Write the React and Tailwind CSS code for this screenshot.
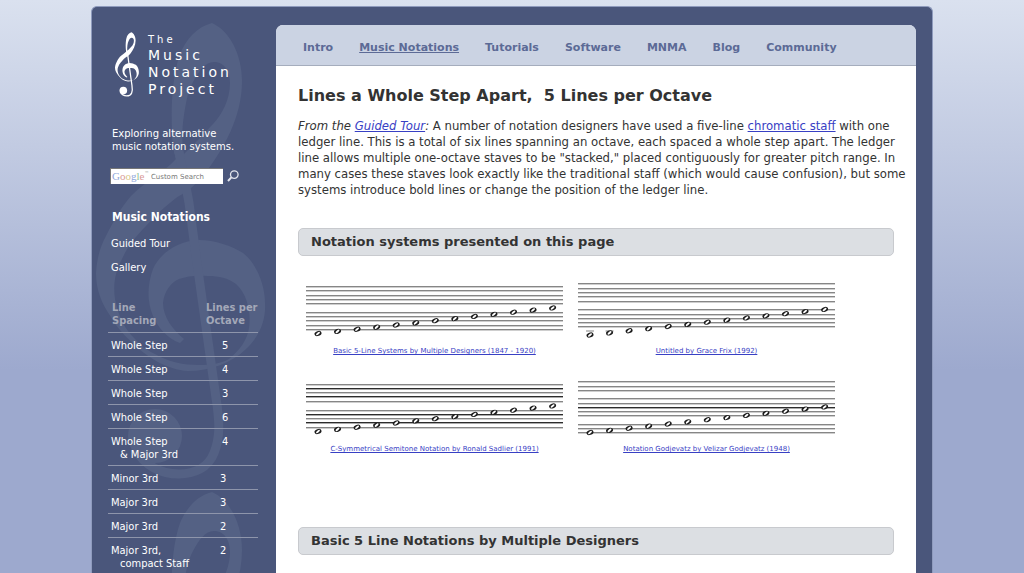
const tabs = ["Intro", "Music Notations", "Tutorials", "Software", "MNMA", "Blog", "Community"];

const rows = [
  { label: "Whole Step", count: 5, wide: true },
  { label: "Whole Step", count: 4, wide: true },
  { label: "Whole Step", count: 3, wide: true },
  { label: "Whole Step", count: 6, wide: true },
  { label: "Whole Step", extra: "& Major 3rd", count: 4, wide: true },
  { label: "Minor 3rd", count: 3 },
  { label: "Major 3rd", count: 3 },
  { label: "Major 3rd", count: 2 },
  { label: "Major 3rd,", extra: "compact Staff", count: 2 },
];

// y and colour of each staff line
const G = "#868686";
const D = "#2c2c2c";
const systems = [
  {
    title: "Basic 5-Line Systems by Multiple Designers (1847 - 1920)",
    lines: [[5, G], [9, G], [14, G], [18, G], [22, G], [31, G], [35, G], [39, G], [44, G], [48, G]],
    noteY: 52.5,
    ledgers: [],
  },
  {
    title: "Untitled by Grace Frix (1992)",
    lines: [[2, G], [7, G], [11, G], [15, G], [20, G], [28, G], [33, G], [37, G], [41, G], [45, G]],
    noteY: 54,
    ledgers: [0, 1],
  },
  {
    title: "C-Symmetrical Semitone Notation by Ronald Sadlier (1991)",
    lines: [[5, G], [9, D], [13, G], [17, D], [22, G], [31, G], [35, D], [39, G], [43, D], [48, G]],
    noteY: 52.5,
    ledgers: [],
  },
  {
    title: "Notation Godjevatz by Velizar Godjevatz (1948)",
    lines: [[2, G], [7, G], [11, G], [19, G], [24, G], [28, D], [32, G], [36, G], [45, G], [49, G], [53, G]],
    noteY: 53.5,
    ledgers: [],
  },
];

function Clef({ className }) {
  return (
    <svg viewBox="0 0 170 456" className={className} fill="currentColor" aria-hidden="true">
      <path
        fillRule="evenodd"
        d="M116 0C134 8 146 32 146 58C146 94 128 126 107 153C97 165 88 170 80 175C66 186 58 194 50 203C38 215 31 225 26 236C19 249 17 262 19 276C22 289 25 299 32 308C40 318 48 326 59 331C72 339 88 342 103 342C114 342 124 341 133 336C144 327 151 317 153 305C155 290 152 272 140 261C132 255 123 253 112 253C101 252 91 253 83 256C75 259 68 269 67 280C67 294 77 307 88 316L84 320C72 316 62 305 57 293C51 279 51 262 57 246C63 232 80 218 103 217C119 217 136 223 147 230C160 240 169 261 169 280C170 295 165 312 150 326C136 340 114 348 92 348C71 347 50 333 40 323C28 312 21 305 15 294C5 280 0 266 0 250C1 235 4 224 10 213C18 197 26 183 35 173C52 156 68 149 80 136C77 128 76 118 76 108C75 84 76 54 84 31C90 17 100 4 116 0ZM118 39C129 39 134 49 134 60C134 76 126 92 117 101C107 112 97 122 87 132C86 118 86 104 88 92C90 79 92 68 97 59C103 48 109 39 118 39Z"
      />
      <path
        fill="none"
        stroke="currentColor"
        strokeWidth="9"
        d="M83 128C86 148 90 162 93 180L101 240L120 375C124 400 124 415 118 430C112 445 98 451 83 451C65 451 48 443 39 425"
      />
      <circle cx="59" cy="413" r="27" />
    </svg>
  );
}

function Staff({ system }) {
  return (
    <svg viewBox="0 0 257 58" className="block w-full" aria-hidden="true">
      {system.lines.map(([y, color]) => (
        <rect key={y} x="0" y={y} width="257" height="1.4" fill={color} />
      ))}
      {system.ledgers.map((n) => (
        <rect key={n} x={8 + n * 19.55} y="49.5" width="8" height="1" fill="#868686" />
      ))}
      {Array.from({ length: 13 }, (_, i) => (
        <g key={i} transform={`translate(${12 + i * 19.55} ${system.noteY - i * 2.13}) rotate(-18)`}>
          <ellipse rx="3.6" ry="2.4" fill="#1c1c1c" />
          <ellipse rx="2.4" ry="1" fill="#fff" transform="rotate(-22)" />
        </g>
      ))}
    </svg>
  );
}

function SectionTitle({ children }) {
  return (
    <h2 className="rounded-[5px] border border-[#c8cace] bg-[#dcdfe3] px-3 text-[13px] leading-[26px] font-bold text-[#333]">
      {children}
    </h2>
  );
}

function Sidebar() {
  return (
    <aside className="relative w-[184px] shrink-0 overflow-hidden font-['DejaVu_Sans_Condensed','DejaVu_Sans',sans-serif] text-white">
      <Clef className="absolute top-4 left-1 w-[170px] text-[#546184]" />
      <Clef className="absolute top-[485px] left-1 w-[170px] text-[#546184]" />

      <div className="relative pt-[25px] pr-[18px] pl-4">
        <a href="#" className="flex gap-[9px] pl-[7px]">
          <Clef className="h-[65px] w-[24px] shrink-0" />
          <span className="block font-['DejaVu_Sans',sans-serif] text-[14px] leading-[17px] tracking-[3px]">
            <span className="block text-[10px] leading-[15px]">The</span>
            <span className="block">Music</span>
            <span className="block">Notation</span>
            <span className="block">Project</span>
          </span>
        </a>

        <p className="mt-[29px] pl-1 font-['DejaVu_Sans',sans-serif] text-[10px] leading-[13px] whitespace-nowrap">
          Exploring alternative
          <br />
          music notation systems.
        </p>

        <form className="mt-[15px] flex items-center gap-1 pl-[2px]">
          <div className="flex h-4 w-[113px] items-center border-t border-l border-[#777] bg-white pl-px">
            <span className="font-['Liberation_Serif',serif] text-[11px] leading-none">
              <span className="text-[#8fa6da]">G</span>
              <span className="text-[#d99a9a]">o</span>
              <span className="text-[#d9c887]">o</span>
              <span className="text-[#8fa6da]">g</span>
              <span className="text-[#8fc098]">l</span>
              <span className="text-[#d99a9a]">e</span>
            </span>
            <span className="self-start text-[5px] leading-[8px] text-[#999]">™</span>
            <input
              type="text"
              aria-label="Search"
              placeholder="Custom Search"
              className="ml-[2px] w-full min-w-0 font-['DejaVu_Sans',sans-serif] text-[7px] leading-3 text-[#666] outline-none placeholder:text-[#777]"
            />
          </div>
          <button type="button" aria-label="Search">
            <svg viewBox="0 0 12 12" className="h-3 w-3" fill="none" stroke="#e4e6ee" aria-hidden="true">
              <circle cx="7.3" cy="4.6" r="3.8" strokeWidth="1.3" />
              <path d="M4.4 7.4L1 11" strokeWidth="2" />
            </svg>
          </button>
        </form>

        <h2 className="mt-[25px] pl-1 text-[12px] leading-4 font-bold">Music Notations</h2>
        <ul className="mt-[11px] pl-[3px] text-[11px] leading-4">
          <li>
            <a href="#">Guided Tour</a>
          </li>
          <li className="mt-2">
            <a href="#">Gallery</a>
          </li>
        </ul>

        <table className="mt-5 w-full text-left text-[11px] leading-[13px]">
          <thead>
            <tr className="border-b border-[#8e95ab] text-[#a3a8b8]">
              <th className="pt-[5px] pb-[5px] pl-1 font-bold">
                Line
                <br />
                Spacing
              </th>
              <th className="w-[52px] pt-[5px] pb-[5px] font-bold whitespace-nowrap">
                Lines per
                <br />
                Octave
              </th>
            </tr>
          </thead>
          <tbody>
            {rows.map((row, i) => (
              <tr key={i} className="border-b border-[#8e95ab] align-top">
                <td className="pt-[6px] pb-1 pl-[3px]">
                  <a href="#">
                    {row.label}
                    {row.extra && <span className="block pl-[9px]">{row.extra}</span>}
                  </a>
                </td>
                <td className={row.wide ? "pt-[6px] pb-1 pl-4" : "pt-[6px] pb-1 pl-[14px]"}>{row.count}</td>
              </tr>
            ))}
          </tbody>
        </table>
      </div>
    </aside>
  );
}

export default function App() {
  return (
    <div className="min-h-screen bg-[#9da9ce] bg-[linear-gradient(to_bottom,#dae1ef_0px,#9da9ce_370px)] pt-[6px] font-['DejaVu_Sans',sans-serif]">
      <div className="mx-auto flex w-full max-w-[842px] rounded-t-[6px] border border-b-0 border-[#8f9bbd] bg-[#4a567b] pr-4">
        <Sidebar />

        <main className="mt-[18px] min-w-0 flex-1 overflow-hidden rounded-t-[7px] bg-white pb-8 text-[#333]">
          <nav className="flex gap-[26px] border-b border-[#a5adbd] bg-[#cbd3e3] px-[27px] pt-[15px] pb-[9px] text-[11px] leading-4 font-bold text-[#5c6a96]">
            {tabs.map((tab) => (
              <a key={tab} href="#" className={tab === "Music Notations" ? "underline" : ""}>
                {tab}
              </a>
            ))}
          </nav>

          <div className="px-[22px] pt-5">
            <h1 className="text-[16px] leading-5 font-bold whitespace-pre-wrap">
              {"Lines a Whole Step Apart,  5 Lines per Octave"}
            </h1>
            <p className="-mr-3 mt-3 font-['DejaVu_Sans_Condensed','DejaVu_Sans',sans-serif] text-[13px] leading-4">
              <em>
                From the{" "}
                <a href="#" className="text-[#3840c4] underline">
                  Guided Tour
                </a>
                :
              </em>{" "}
              A number of notation designers have used a five-line{" "}
              <a href="#" className="text-[#3840c4] underline">
                chromatic staff
              </a>{" "}
              with one ledger line. This is a total of six lines spanning an octave, each spaced a whole
              step apart. The ledger line allows multiple one-octave staves to be "stacked," placed
              contiguously for greater pitch range. In many cases these staves look exactly like the
              traditional staff (which would cause confusion), but some systems introduce bold lines or
              change the position of the ledger line.
            </p>

            <div className="mt-[30px]">
              <SectionTitle>Notation systems presented on this page</SectionTitle>
            </div>

            <div className="mt-[25px] grid grid-cols-[257px_257px] gap-x-[15px] gap-y-[23px] pl-2">
              {systems.map((system) => (
                <figure key={system.title}>
                  <Staff system={system} />
                  <figcaption className="mt-[7px] text-center text-[7px] leading-[10px] whitespace-nowrap">
                    <a href="#" className="text-[#3840c4] underline">
                      {system.title}
                    </a>
                  </figcaption>
                </figure>
              ))}
            </div>

            <div className="mt-[73px]">
              <SectionTitle>Basic 5 Line Notations by Multiple Designers</SectionTitle>
            </div>
          </div>
        </main>
      </div>
    </div>
  );
}
